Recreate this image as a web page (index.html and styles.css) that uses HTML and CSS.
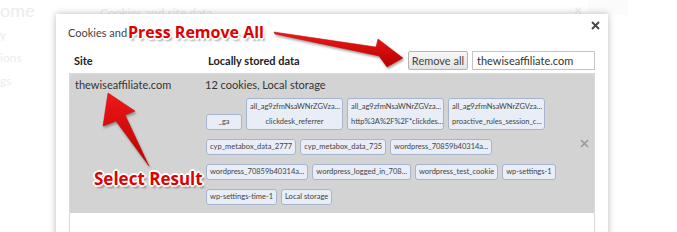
FILE: index.html
```html
<html>

<head>
    <link rel="stylesheet" href="styles.css">
</head>

<body>
    <div class="page">
        <div class="side">
            <div class="side-logo">ome</div>
            <div class="side-item">y</div>
            <div class="side-item">ions</div>
            <div class="side-item">gs</div>
        </div>
        <div class="behind">
            <span class="behind-title">Cookies and site data</span>
            <span class="behind-x">&#215;</span>
            <span class="behind-box"></span>
        </div>
    </div>

    <div class="dialog">
        <div class="dlg-title">Cookies and</div>
        <svg class="dlg-close" width="9" height="9" viewBox="0 0 9 9">
            <path d="M1 1 L8 8 M8 1 L1 8" stroke="#444" stroke-width="1.8" />
        </svg>

        <div class="toolbar">
            <div class="col-site">Site</div>
            <div class="col-data">Locally stored data</div>
            <button class="btn">Remove all</button>
            <input class="search" type="text" value="thewiseaffiliate.com">
        </div>

        <div class="list">
            <div class="row">
                <div class="site">thewiseaffiliate.com</div>
                <div class="data">
                    <div class="summary">12 cookies, Local storage</div>
                    <div class="chips">
                        <span class="chip chip-small">_ga</span>
                        <span class="chip chip-two">all_ag9zfmNsaWNrZGVza...<br>clickdesk_referrer</span>
                        <span class="chip chip-two">all_ag9zfmNsaWNrZGVza...<br>http%3A%2F%2F*clickdes...</span>
                        <span class="chip chip-two">all_ag9zfmNsaWNrZGVza...<br>proactive_rules_session_c...</span>
                        <span class="chip">cyp_metabox_data_2777</span>
                        <span class="chip">cyp_metabox_data_735</span>
                        <span class="chip">wordpress_70859b40314a...</span>
                        <span class="chip">wordpress_70859b40314a...</span>
                        <span class="chip">wordpress_logged_in_708...</span>
                        <span class="chip">wordpress_test_cookie</span>
                        <span class="chip">wp-settings-1</span>
                        <span class="chip">wp-settings-time-1</span>
                        <span class="chip">Local storage</span>
                    </div>
                </div>
                <svg class="row-remove" width="9" height="9" viewBox="0 0 9 9">
                    <path d="M1 1 L8 8 M8 1 L1 8" stroke="#9a9a9a" stroke-width="1.6" />
                </svg>
            </div>
        </div>
    </div>

    <!-- annotations drawn over the screenshot -->
    <svg class="marks" width="677" height="232" viewBox="0 0 677 232">
        <defs>
            <linearGradient id="red" x1="0" y1="0" x2="0" y2="1">
                <stop offset="0" stop-color="#f01818" />
                <stop offset="1" stop-color="#b80000" />
            </linearGradient>
        </defs>
        <polygon class="arrow" points="274,32 376,47 378,39 403,58 387,67 379,56 275,34" />
        <polygon class="arrow" points="108,93 135,111 125,115 149,166 116,121 103,126" />
    </svg>
    <div class="note note-remove">Press Remove All</div>
    <div class="note note-select">Select Result</div>
</body>

</html>
```

FILE: styles.css
```css
body {
    margin: 0;
    width: 677px;
    height: 232px;
    overflow: hidden;
    position: relative;
    background: #fff;
    font-family: Lato, "Open Sans", sans-serif;
    color: #333;
}

/* faded settings page behind the dialog */
.page {
    display: flex;
    height: 232px;
}

.side {
    width: 56px;
    color: #ececec;
    font-size: 12px;
}

.side-logo {
    font-size: 18px;
    line-height: 20px;
}

.side-item {
    margin-top: 7px;
    line-height: 16px;
}

.behind {
    flex: 1;
    position: relative;
    color: #ebebeb;
    font-size: 12px;
}

.behind-title {
    position: absolute;
    left: 44px;
    top: 5px;
}

.behind-x {
    position: absolute;
    left: 518px;
    top: 1px;
    font-size: 14px;
}

.behind-box {
    position: absolute;
    left: 532px;
    top: 0;
    width: 40px;
    height: 15px;
    background: #fbfbfb;
}

/* dialog */
.dialog {
    position: absolute;
    left: 56px;
    top: 14px;
    width: 552px;
    height: 240px;
    padding: 0 13px;
    box-sizing: border-box;
    background: #fff;
    box-shadow: 0 0 7px rgba(0, 0, 0, 0.28);
    font-size: 11px;
}

.dlg-title {
    margin: 10px 0 0 -1px;
    line-height: 18px;
    font-size: 11px;
    color: #444;
}

.dlg-close {
    position: absolute;
    right: 8px;
    top: 7px;
}

.toolbar {
    display: flex;
    align-items: center;
    height: 19px;
    margin-top: 9px;
}

.col-site {
    width: 134px;
    padding-left: 5px;
    font-weight: bold;
    color: #222;
}

.col-data {
    font-weight: bold;
    color: #222;
}

.btn {
    margin-left: auto;
    width: 60px;
    height: 19px;
    padding: 0;
    border: 1px solid #b4b4b4;
    border-radius: 2px;
    background: linear-gradient(#f7f7f7, #e4e4e4);
    font-family: inherit;
    font-size: 11px;
    color: #444;
}

.search {
    width: 123px;
    height: 19px;
    margin-left: 4px;
    padding: 0 4px;
    box-sizing: border-box;
    border: 1px solid #c4c4c4;
    font-family: inherit;
    font-size: 11px;
    color: #333;
}

.list {
    margin-top: 3px;
    height: 200px;
    border: 1px solid #dadada;
    border-bottom: none;
}

.row {
    display: flex;
    height: 139px;
    background: #d3d3d3;
}

.site {
    width: 130px;
    padding: 3px 0 0 5px;
    line-height: 16px;
    color: #333;
}

.data {
    width: 356px;
    padding-top: 3px;
}

.summary {
    line-height: 16px;
}

.chips {
    display: flex;
    flex-wrap: wrap;
    align-items: flex-end;
    gap: 9px 4px;
    margin-top: 5px;
    margin-left: 1px;
}

.chip {
    min-width: 24px;
    padding: 0 3px;
    line-height: 14px;
    border: 1px solid #a6b4cd;
    border-radius: 3px;
    background: #e8edf6;
    font-size: 7.5px;
    color: #444;
    text-align: center;
    white-space: nowrap;
}

.chip-small {
    min-width: 28px;
}

.chip-two {
    width: 89px;
    line-height: 15px;
}

.row-remove {
    align-self: center;
    margin-left: auto;
    margin-right: 5px;
}

/* red annotations */
.marks {
    position: absolute;
    left: 0;
    top: 0;
}

.arrow {
    fill: url(#red);
    stroke: #c80000;
    stroke-width: 0.5;
    filter: drop-shadow(1px 2px 1px rgba(0, 0, 0, 0.35));
}

.note {
    position: absolute;
    font-family: "Open Sans", sans-serif;
    font-weight: bold;
    font-size: 16px;
    color: #e00000;
    white-space: nowrap;
    text-shadow:
        -1px -1px 0 #fff, 1px -1px 0 #fff, -1px 1px 0 #fff, 1px 1px 0 #fff,
        0 -2px 0 #fff, 0 2px 0 #fff, -2px 0 0 #fff, 2px 0 0 #fff,
        2px 3px 2px rgba(0, 0, 0, 0.35);
}

.note-remove {
    left: 128px;
    top: 21px;
}

.note-select {
    left: 94px;
    top: 167px;
    font-size: 17px;
}
```
